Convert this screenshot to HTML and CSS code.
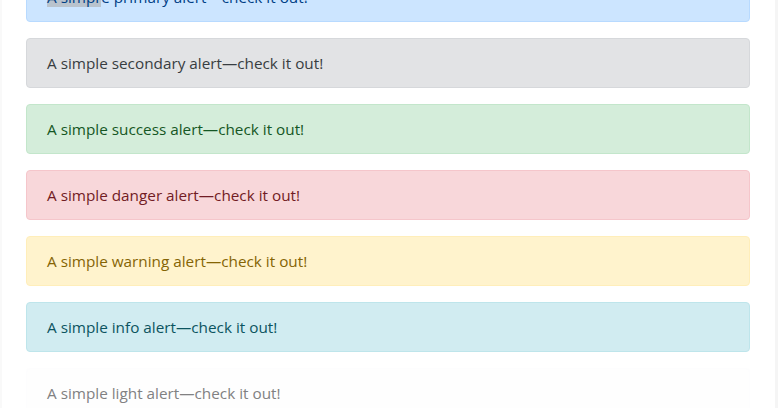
FILE: index.html
```html
<!DOCTYPE html>
<html lang="en">
<head>
<meta charset="utf-8">
<title>Alerts</title>
<link rel="stylesheet" href="styles.css">
</head>
<body>
<div class="frame">
  <div class="container">
    <div class="alert alert-primary"><span class="sel">A simpl</span>e primary alert—check it out!</div>
    <div class="alert alert-secondary">A simple secondary alert—check it out!</div>
    <div class="alert alert-success">A simple success alert—check it out!</div>
    <div class="alert alert-danger">A simple danger alert—check it out!</div>
    <div class="alert alert-warning">A simple warning alert—check it out!</div>
    <div class="alert alert-info">A simple info alert—check it out!</div>
    <div class="alert alert-light">A simple light alert—check it out!</div>
  </div>
</div>
</body>
</html>
```
FILE: styles.css
```css
html, body {
  margin: 0;
  padding: 0;
  background: #fff;
  overflow: hidden;
  height: 408px;
}
body {
  font-family: "Open Sans", "Noto Sans", sans-serif;
  font-size: 15.3px;
  line-height: 24px;
}
.frame {
  display: flex;
  height: 408px;
  border-left: 2px solid #f9f9f9;
  border-right: 3px solid #f5f5f5;
  box-sizing: border-box;
  overflow: hidden;
}
.container {
  flex: 1;
  margin-top: -28px;
  padding-left: 24px;
  padding-right: 25px;
}
.alert {
  padding: 12px 20px;
  margin-bottom: 16px;
  border: 1px solid transparent;
  border-radius: 4px;
}
.sel { background: #b9c3cd; padding-right: 2px; }
.alert-primary { color: #004085; background: #cce5ff; border-color: #b8daff; }
.alert-secondary { color: #383d41; background: #e2e3e5; border-color: #d6d8db; }
.alert-success { color: #155724; background: #d4edda; border-color: #c3e6cb; }
.alert-danger { color: #721c24; background: #f8d7da; border-color: #f5c6cb; }
.alert-warning { color: #856404; background: #fff3cd; border-color: #ffeeba; }
.alert-info { color: #0c5460; background: #d1ecf1; border-color: #bee5eb; }
.alert-light { color: #818182; background: #fefefe; border-color: #fdfdfe; }
```
